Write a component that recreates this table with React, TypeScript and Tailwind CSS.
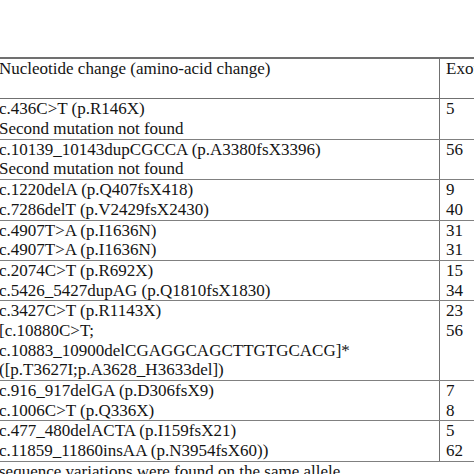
const groups: { lines: string[]; exons: string[] }[] = [
  { lines: ['c.436C>T (p.R146X)', 'Second mutation not found'], exons: ['5', ''] },
  { lines: ['c.10139_10143dupCGCCA (p.A3380fsX3396)', 'Second mutation not found'], exons: ['56', ''] },
  { lines: ['c.1220delA (p.Q407fsX418)', 'c.7286delT (p.V2429fsX2430)'], exons: ['9', '40'] },
  { lines: ['c.4907T>A (p.I1636N)', 'c.4907T>A (p.I1636N)'], exons: ['31', '31'] },
  { lines: ['c.2074C>T (p.R692X)', 'c.5426_5427dupAG (p.Q1810fsX1830)'], exons: ['15', '34'] },
  {
    lines: [
      'c.3427C>T (p.R1143X)',
      '[c.10880C>T;',
      'c.10883_10900delCGAGGCAGCTTGTGCACG]*',
      '([p.T3627I;p.A3628_H3633del])',
    ],
    exons: ['23', '56', '', ''],
  },
  { lines: ['c.916_917delGA (p.D306fsX9)', 'c.1006C>T (p.Q336X)'], exons: ['7', '8'] },
  { lines: ['c.477_480delACTA (p.I159fsX21)', 'c.11859_11860insAA (p.N3954fsX60))'], exons: ['5', '62'] },
];

export default function App() {
  return (
    <div
      className="w-[474px] h-[474px] overflow-hidden bg-white text-[#141414] text-[17px] leading-[19.7px]"
      style={{ fontFamily: '"Liberation Serif", "Times New Roman", serif' }}
    >
      <div className="pt-[57px] ml-[-1px] w-[520px]">
        {/* Header */}
        <div className="flex border-t-2 border-b border-[#707070]">
          <div className="w-[440px] h-[39.4px] whitespace-nowrap">Nucleotide change (amino-acid change)</div>
          <div className="flex-1 border-l border-[#707070] pl-[6px] whitespace-nowrap">Exon</div>
        </div>

        {groups.map((g, i) => (
          <div key={i} className="flex border-b border-[#808080]">
            <div className="w-[440px] whitespace-nowrap">
              {g.lines.map((l, j) => (
                <div key={j} className="h-[19.7px]">{l}</div>
              ))}
            </div>
            <div className="flex-1 border-l border-[#707070] pl-[6px]">
              {g.exons.map((e, j) => (
                <div key={j} className="h-[19.7px]">{e}</div>
              ))}
            </div>
          </div>
        ))}

        <div className="whitespace-nowrap">sequence variations were found on the same allele</div>
      </div>
    </div>
  );
}
